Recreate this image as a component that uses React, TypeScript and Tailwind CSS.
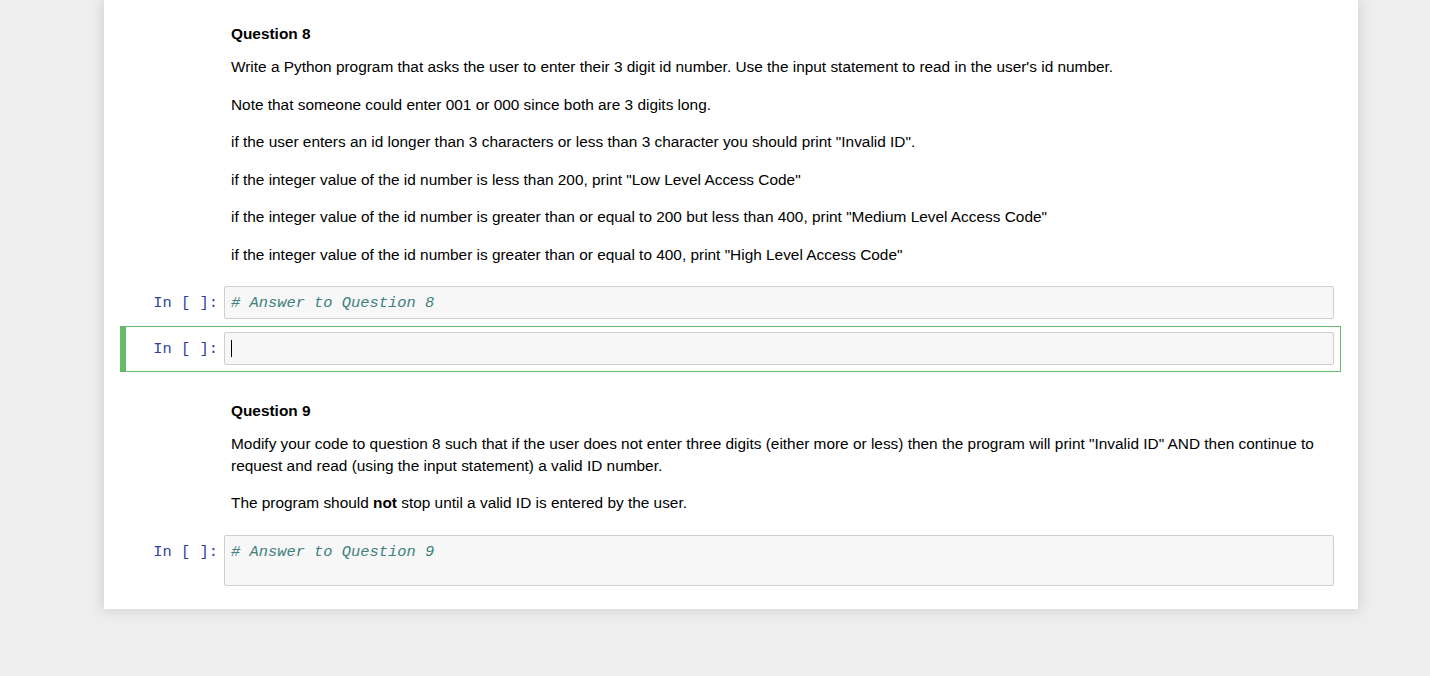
import React from "react";

const sans = { fontFamily: '"Liberation Sans", Arial, Helvetica, sans-serif' };

function Prompt() {
  return (
    <div className="w-[98px] shrink-0 pr-[6px] pt-[7px] text-right font-['Liberation_Mono',monospace] text-[15.4px] leading-[18px] text-[#303F9F]">
      <span className="relative top-[1px]">In&nbsp;[&nbsp;]:</span>
    </div>
  );
}

function CodeCell({
  selected,
  lines,
}: {
  selected?: boolean;
  lines: React.ReactNode[];
}) {
  return (
    <div
      className={
        selected
          ? "flex border border-l-[6px] border-[#66BB6A] pt-[5px] pb-[6px] pr-[6px]"
          : "flex border border-transparent pt-[5px] pb-[6px] pl-[5px] pr-[6px]"
      }
    >
      <Prompt />
      <div className="flex-1 rounded-[2px] border border-[#cfcfcf] bg-[#f7f7f7] pl-[6px] pt-[7px] pb-[6px] font-['Liberation_Mono',monospace] text-[15.4px] leading-[18px]">
        {lines.map((l, i) => (
          <div key={i} className="h-[18px] whitespace-pre">
            {l}
          </div>
        ))}
      </div>
    </div>
  );
}

function Comment({ children }: { children: React.ReactNode }) {
  return <span className="italic text-[#408080]">{children}</span>;
}

function MarkdownCell({
  className,
  title,
  paras,
}: {
  className: string;
  title: string;
  paras: React.ReactNode[];
}) {
  return (
    <div className={className}>
      <div className="flex">
        <div className="w-[98px] shrink-0" />
        <div
          className="flex-1 pl-[7px] pr-[7px] text-[15.4px] leading-[22px] text-black"
          style={sans}
        >
          <div className="mb-[11px] font-bold">{title}</div>
          {paras.map((p, i) => (
            <p key={i} className={i === paras.length - 1 ? "" : "mb-[15.5px]"}>
              {p}
            </p>
          ))}
        </div>
      </div>
    </div>
  );
}

export default function App() {
  return (
    <div className="h-[676px] w-full overflow-hidden bg-[#eeeeee]">
      <div className="ml-[104px] w-[1254px] bg-white pl-[16px] pr-[17px] pb-[16px] shadow-[0_0_12px_1px_rgba(87,87,87,0.2)]">
        <MarkdownCell
          className="pt-[23px] pb-[14px] pl-[6px] pr-[6px]"
          title="Question 8"
          paras={[
            "Write a Python program that asks the user to enter their 3 digit id number. Use the input statement to read in the user's id number.",
            "Note that someone could enter 001 or 000 since both are 3 digits long.",
            'if the user enters an id longer than 3 characters or less than 3 character you should print "Invalid ID".',
            'if the integer value of the id number is less than 200, print "Low Level Access Code"',
            'if the integer value of the id number is greater than or equal to 200 but less than 400, print "Medium Level Access Code"',
            'if the integer value of the id number is greater than or equal to 400, print "High Level Access Code"',
          ]}
        />
        <CodeCell lines={[<Comment># Answer to Question 8</Comment>]} />
        <CodeCell
          selected
          lines={[
            <span className="relative inline-block h-[17px] w-[1px] bg-black align-top" />,
          ]}
        />
        <MarkdownCell
          className="pt-[28px] pb-[15px] pl-[6px] pr-[6px]"
          title="Question 9"
          paras={[
            'Modify your code to question 8 such that if the user does not enter three digits (either more or less) then the program will print "Invalid ID" AND then continue to request and read (using the input statement) a valid ID number.',
            <>
              The program should <b>not</b> stop until a valid ID is entered by the user.
            </>,
          ]}
        />
        <CodeCell lines={[<Comment># Answer to Question 9</Comment>, ""]} />
      </div>
    </div>
  );
}
